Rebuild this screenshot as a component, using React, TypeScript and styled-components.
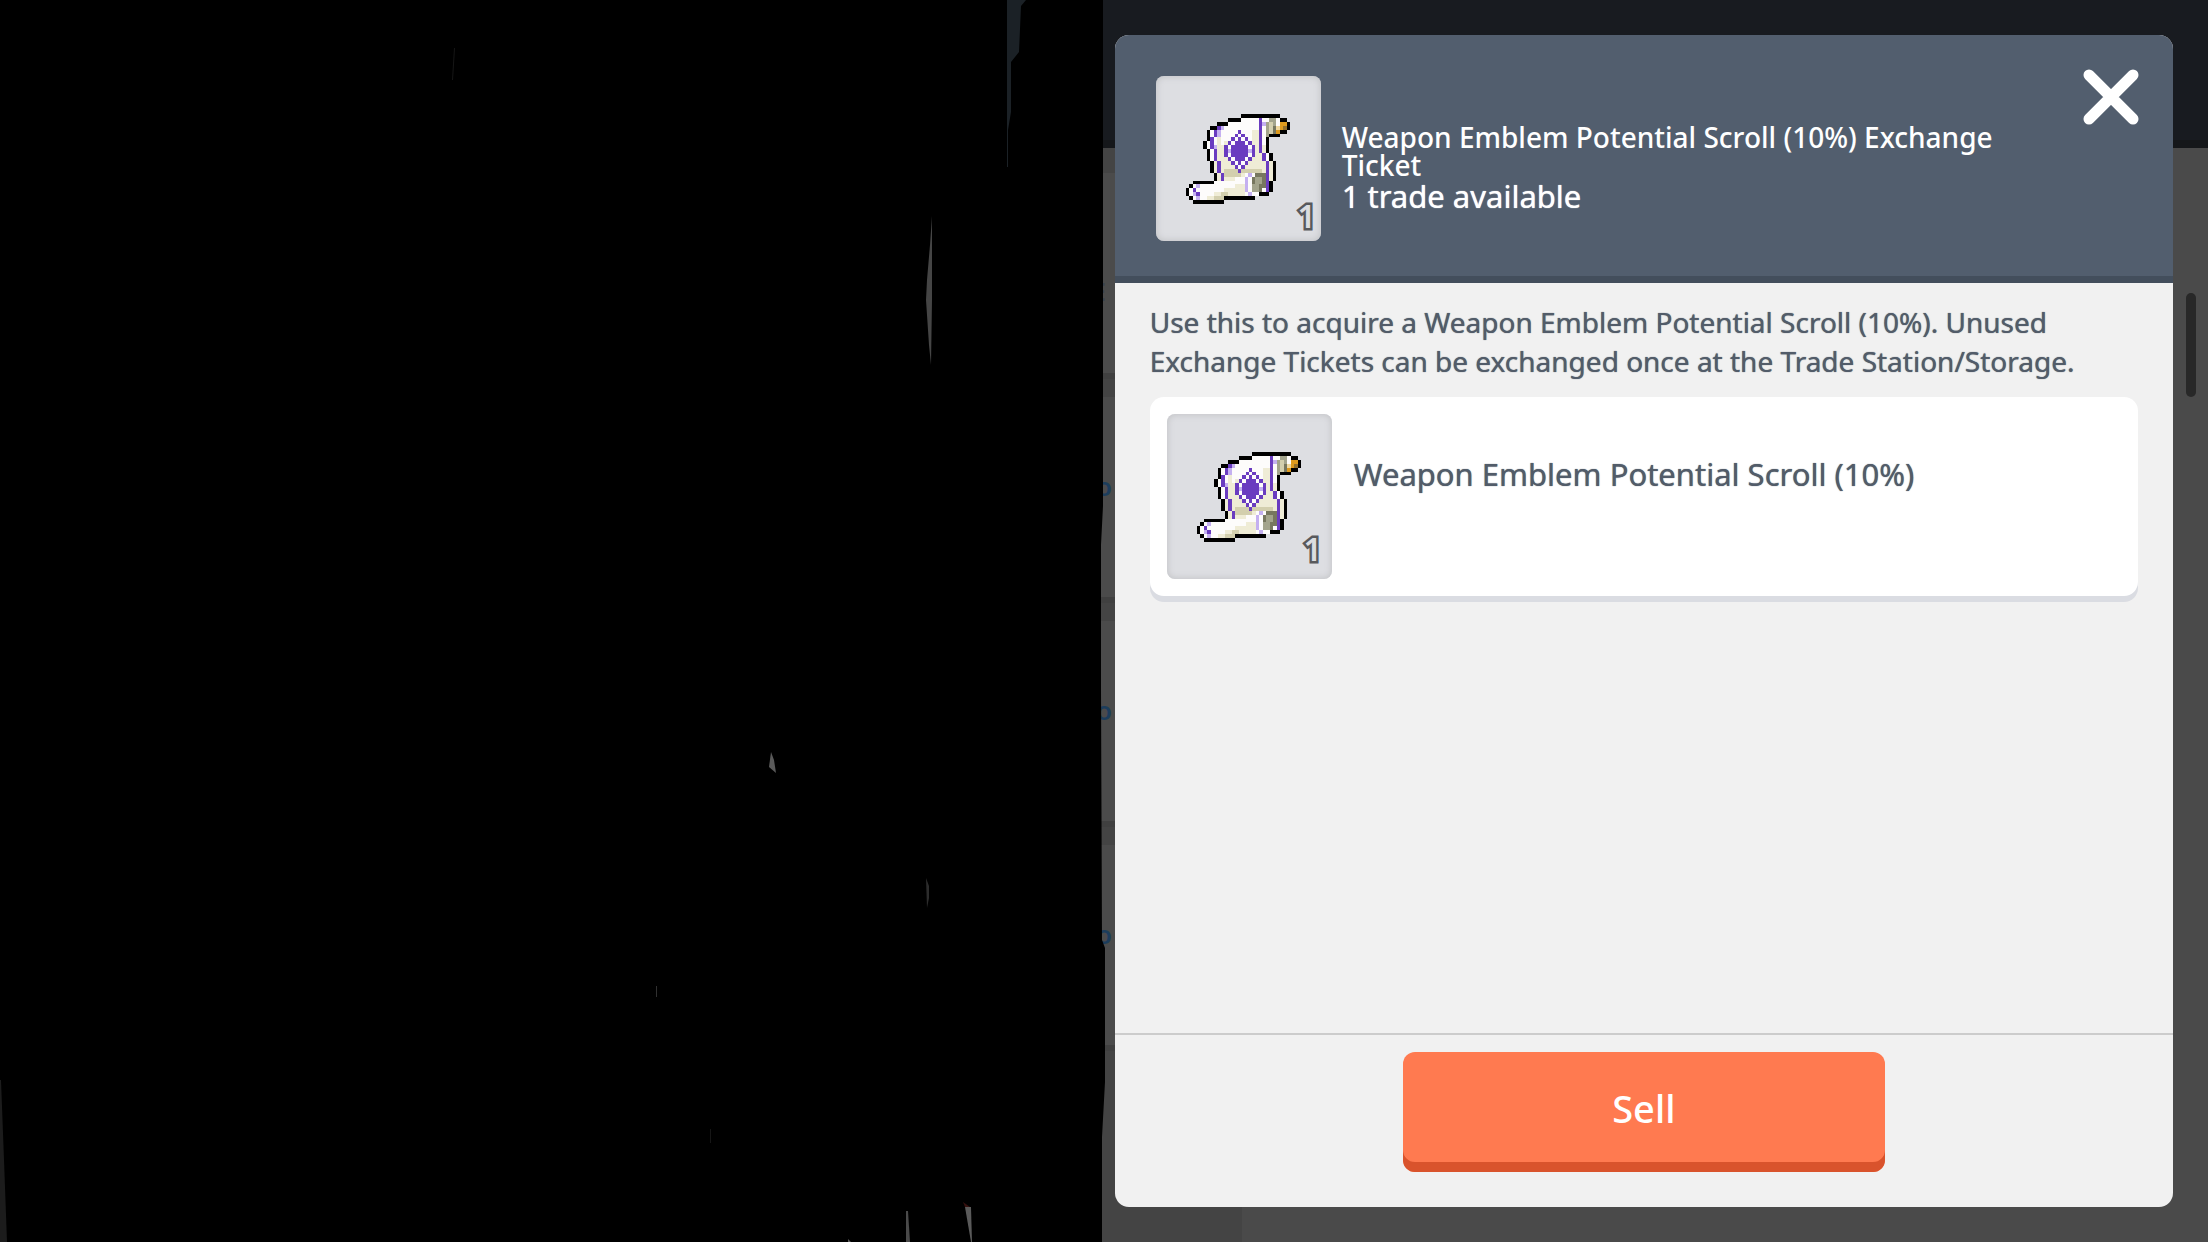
import React from "react";
import styled, { createGlobalStyle } from "styled-components";

const GlobalStyle = createGlobalStyle`
  * { box-sizing: border-box; }
  body {
    margin: 0;
    background: #000;
    font-family: "Noto Sans", "Open Sans", sans-serif;
  }
`;

const Screen = styled.div`
  position: relative;
  min-height: 100vh;
  display: flex;
  overflow: hidden;
`;

/* Dimmed storage list behind the dialog */

const Backdrop = styled.div`
  flex: 1;
  display: flex;
  flex-direction: column;
  background: #4a4a4a;
`;

const TopBar = styled.div`
  height: 148px;
  background: #181b20;
  border-bottom: 8px solid #15171a;
`;

const Columns = styled.div`
  flex: 1;
  display: flex;
  justify-content: space-between;
  padding-right: 12px;
`;

const List = styled.div`
  width: 1242px;
  display: flex;
  flex-direction: column;
  gap: 18px;
  padding-top: 25px;
  background: #444444;
`;

const ListRow = styled.div<{ $heading?: boolean }>`
  height: 206px;
  display: flex;
  align-items: center;
  justify-content: flex-end;
  padding: ${(p) => (p.$heading ? "36px 136px 0 0" : "0 130px 22px 0")};
  background: #4b4b4b;
  border-bottom: 6px solid #404040;
  font-size: 26px;
  line-height: 26px;
  font-weight: 600;
  color: ${(p) => (p.$heading ? "#3a424e" : "#1c3d5c")};
`;

const ScrollThumb = styled.div`
  width: 10px;
  height: 104px;
  margin-top: 145px;
  border-radius: 5px;
  background: #282828;
`;

const Shade = styled.svg`
  position: absolute;
  inset: 0;
  width: 100%;
  height: 100%;
`;

/* Dialog */

const Overlay = styled.div`
  position: absolute;
  inset: 0;
  display: flex;
  justify-content: flex-end;
  padding: 35px;
`;

const Dialog = styled.section`
  width: 49.5%;
  display: flex;
  flex-direction: column;
  overflow: hidden;
  border-radius: 14px;
  background: #f1f1f1;
`;

const DialogHeader = styled.header`
  display: flex;
  align-items: flex-start;
  padding: 41px 34px 35px 41px;
  background: #525e6e;
  border-bottom: 7px solid #434e5c;
`;

const HeaderText = styled.div`
  flex: 1;
  padding: 47px 80px 0 21px;
  color: #ffffff;
`;

const Title = styled.h1`
  margin: 0;
  font-size: 28px;
  line-height: 28px;
  font-weight: 500;
`;

const Trades = styled.p`
  margin: 0;
  font-size: 31px;
  line-height: 34px;
  font-weight: 400;
  text-shadow: 0 0 1px #ffffff;
`;

const CloseButton = styled.button`
  margin: -7px 0 0;
  padding: 0;
  border: 0;
  background: none;
  cursor: pointer;
  svg { display: block; }
`;

const DialogBody = styled.div`
  flex: 1;
  padding: 20px 35px;
`;

const Description = styled.p`
  margin: 0 0 16px;
  font-size: 28px;
  line-height: 39px;
  font-weight: 400;
  color: #525c69;
  text-shadow: 0 0 1px #525c69;
`;

const ItemCard = styled.article`
  display: flex;
  gap: 22px;
  padding: 17px;
  border-radius: 14px;
  background: #ffffff;
  box-shadow: 0 6px 0 #dadce2;
`;

const ItemName = styled.h2`
  margin: 0;
  padding-top: 40px;
  font-size: 31px;
  line-height: 40px;
  font-weight: 400;
  color: #525c69;
  text-shadow: 0 0 1px #525c69;
`;

const DialogFooter = styled.footer`
  display: flex;
  justify-content: center;
  padding: 17px 0 35px;
  border-top: 2px solid #cccccc;
`;

const SellButton = styled.button`
  width: 482px;
  height: 120px;
  padding: 0 0 8px;
  border: 0;
  border-radius: 12px;
  background: #ff7a50;
  box-shadow: inset 0 -10px 0 #d9532c;
  color: #ffffff;
  font: 500 38px/52px "Noto Sans", "Open Sans", sans-serif;
  cursor: pointer;
`;

const Slot = styled.div`
  position: relative;
  flex: none;
  width: 165px;
  height: 165px;
  display: flex;
  align-items: center;
  justify-content: center;
  border-radius: 8px;
  background: #dddee2;
  box-shadow: inset 0 0 6px 1px #c4c5c8;
`;

const Count = styled.span<{ $wide?: boolean }>`
  position: absolute;
  right: ${(p) => (p.$wide ? 10 : 5)}px;
  bottom: ${(p) => (p.$wide ? 15 : 10)}px;
  font-size: 32px;
  line-height: 30px;
  font-weight: 600;
  color: #dcdde0;
  -webkit-text-stroke: 5px #58595c;
  paint-order: stroke fill;
`;

const PALETTE: Record<string, string> = {
  K: "#000000",
  W: "#fdfcfb",
  C: "#efecd6",
  D: "#d3cfae",
  P: "#6a3cc0",
  L: "#c4b0f0",
  G: "#a3a48c",
  H: "#77775f",
  O: "#dd9a1e",
  Y: "#f0d9a0",
  B: "#94702a",
};

const SCROLL = [
  "................KKKKKKKKKKK...",
  "............KKKKWWWWWPWWGGWKK.",
  ".........KKKWWWWWWWWWPLGDGWOOK",
  ".......KKPLWWWWWWWWWWPWGDHYOBK",
  "......KWPLWWWWWPWWWCCPWGDHOKK.",
  "......KWPLWWWWPWPWWCCPWGKKK...",
  "......KPWCWWWPWPWPWCCPWK......",
  ".....KWPWCWCPWPPPWPCCPWK......",
  ".....KWPLCCPWPPPPPWPCPCK......",
  "......KWPCCPLPPPPPLPCPCK......",
  "......KWPCCPWPPPPPWPCCPWK.....",
  "......KWPCCCPWPPPWPCCCPWK.....",
  ".......KCPCCCPWPWPCCCCCPCK....",
  ".......KCPCCCCPWPCCCCCCPCK....",
  ".......KCPCDDDDPDDDDDDCPCK....",
  "........KCPDDDDDCWLWHHHPCK....",
  "........KCPCCCWWWLWHGGHPCK....",
  "..KKKKKKWWWWWWWWWLWHGGHPK.....",
  ".KWLWWWWWWWWWWCCCLWGGHHPK.....",
  "KWPWWWWWWWWCCCCCCLWGGHWPK.....",
  "KWLPWWWWCCDDCCCCCWLWWKKK......",
  ".KWLWWCCDDDKKKKKKKKK..........",
  "..KKKKKKKKK...................",
];

function ScrollIcon() {
  return (
    <svg width="104" height="90" viewBox="0 0 30 23" preserveAspectRatio="none" shapeRendering="crispEdges" aria-hidden="true">
      {SCROLL.flatMap((row, y) =>
        [...row].map((cell, x) =>
          cell === "." ? null : <rect key={`${x}-${y}`} x={x} y={y} width="1" height="1" fill={PALETTE[cell]} />
        )
      )}
    </svg>
  );
}

function ItemSlot({ count, wide }: { count: number; wide?: boolean }) {
  return (
    <Slot>
      <ScrollIcon />
      <Count $wide={wide}>{count}</Count>
    </Slot>
  );
}

function ShadeOverlay() {
  return (
    <Shade viewBox="0 0 2208 1242" preserveAspectRatio="none" aria-hidden="true">
      <path fill="#000" d="M0 0H1103V506L1101 545V690L1102 940L1105 948V1082L1102 1137V1242H0Z" />
      <path fill="#1b2126" d="M1007 0H1026L1021 6L1019 52L1011 62V112L1008 130V167H1007Z" />
      <path fill="#454545" d="M932 216L930 245L927 280L926 300L929 345L931 365L932 300Z" />
      <path fill="#5a5a5a" d="M771 752L774 760L776 773L769 767Z" />
      <path fill="#2c2c2c" d="M926 878L929 886L929 898L927 908Z" />
      <path fill="#303030" d="M656 986H657V997H656Z" />
      <path fill="#161616" d="M454 48H455L453 80H452Z" />
      <path fill="#161616" d="M710 1129H711V1143H710Z" />
      <path fill="#1c1c1c" d="M0 1080H1L4 1160L7 1242H0Z" />
      <path fill="#4a4a4a" d="M906 1211H908L910 1242H906Z" />
      <path fill="#5a5a5a" d="M965 1207H971L972 1242H971Z" />
      <path fill="#35100e" d="M963 1202L970 1207H965Z" />
      <path fill="#5a5a5a" d="M848 1239L851 1242H848Z" />
    </Shade>
  );
}

export default function App() {
  return (
    <>
      <GlobalStyle />
      <Screen>
        <Backdrop aria-hidden="true">
          <TopBar />
          <Columns>
            <List>
              <ListRow $heading>E</ListRow>
              <ListRow>o</ListRow>
              <ListRow>o</ListRow>
              <ListRow>o</ListRow>
            </List>
            <ScrollThumb />
          </Columns>
        </Backdrop>
        <ShadeOverlay />
        <Overlay>
          <Dialog role="dialog" aria-labelledby="dialog-title">
            <DialogHeader>
              <ItemSlot count={1} />
              <HeaderText>
                <Title id="dialog-title">Weapon Emblem Potential Scroll (10%) Exchange Ticket</Title>
                <Trades>1 trade available</Trades>
              </HeaderText>
              <CloseButton type="button" aria-label="Close">
                <svg width="56" height="56" viewBox="0 0 56 56">
                  <path d="M6 6L50 50M50 6L6 50" stroke="#fff" strokeWidth="11" strokeLinecap="round" />
                </svg>
              </CloseButton>
            </DialogHeader>
            <DialogBody>
              <Description>
                Use this to acquire a Weapon Emblem Potential Scroll (10%). Unused Exchange Tickets can be exchanged once at the
                Trade Station/Storage.
              </Description>
              <ItemCard>
                <ItemSlot count={1} wide />
                <ItemName>Weapon Emblem Potential Scroll (10%)</ItemName>
              </ItemCard>
            </DialogBody>
            <DialogFooter>
              <SellButton type="button">Sell</SellButton>
            </DialogFooter>
          </Dialog>
        </Overlay>
      </Screen>
    </>
  );
}
